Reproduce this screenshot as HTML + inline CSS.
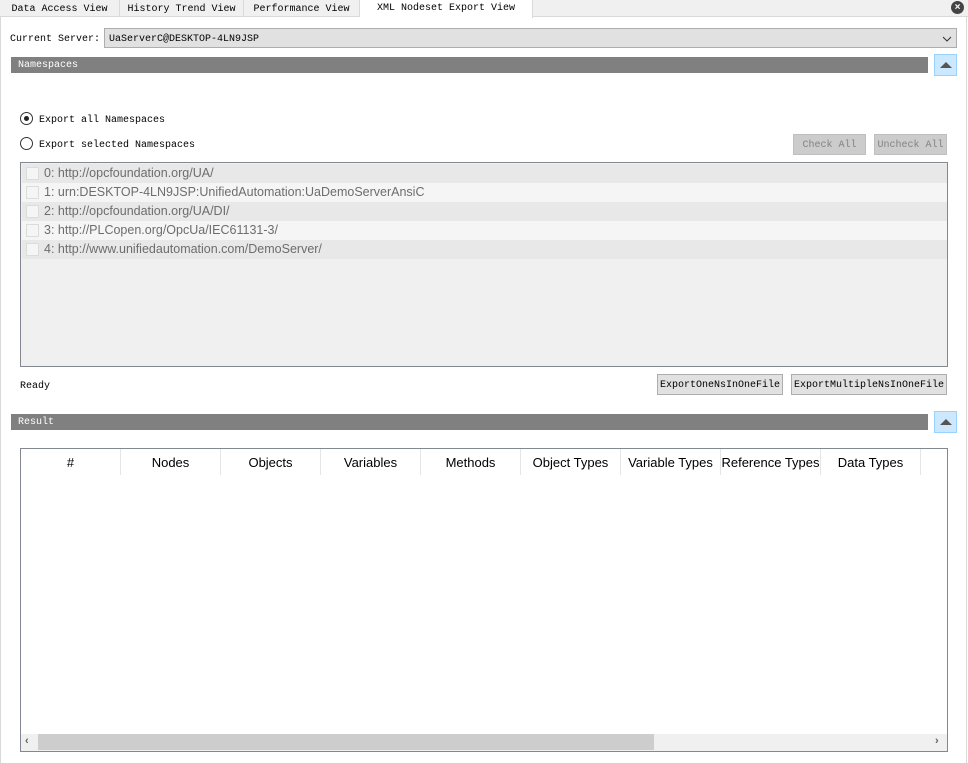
<!DOCTYPE html>
<html><head><style>
*{margin:0;padding:0;box-sizing:border-box}
body{width:968px;height:763px;background:#fff;position:relative;overflow:hidden;font-family:"Liberation Mono",monospace;font-size:10px;color:#000}
.a{position:absolute}
.tab{position:absolute;top:0;height:17px;background:#f0f0f0;border-right:1px solid #d9d9d9;border-bottom:1px solid #d9d9d9;line-height:19px;text-align:center}
.bar{position:absolute;left:11px;width:917px;height:16px;background:#808080;color:#fff;line-height:18px;padding-left:7px}
.col{position:absolute;top:0;width:100px;height:26px;border-right:1px solid #e5e5e5;text-align:center;line-height:27px;font-family:"Liberation Sans",sans-serif;font-size:13px}
.row{position:absolute;left:1px;width:925px;height:19px;line-height:19px;font-family:"Liberation Sans",sans-serif;font-size:12.5px;color:#6d6d6d;padding-left:22px}
.row i{position:absolute;left:4px;top:3px;width:13px;height:13px;border:1px solid #dcdcdc;background:#f5f5f5}
.btn{position:absolute;height:21px;border:1px solid #adadad;background:#e1e1e1;text-align:center;line-height:22px}
.col-btn{position:absolute;width:23px;height:22px;background:#cce8ff;border:1px solid #99d1ff}
.col-btn:after{content:"";position:absolute;left:5px;top:7px;border-left:6px solid transparent;border-right:6px solid transparent;border-bottom:6px solid #555}
</style></head><body>
<div class="a" style="left:0;top:0;width:968px;height:17px;background:#f0f0f0;border-bottom:1px solid #d9d9d9"></div>
<div class="tab" style="left:0;width:120px">Data Access View</div>
<div class="tab" style="left:120px;width:124px">History Trend View</div>
<div class="tab" style="left:244px;width:116px">Performance View</div>
<div class="a" style="left:360px;top:0;width:173px;height:18px;background:#fff;border-right:1px solid #d9d9d9;line-height:18px;text-align:center">XML Nodeset Export View</div>
<div class="a" style="left:951px;top:1px;width:13px;height:13px;border-radius:50%;background:#444;color:#fff;font:bold 10px/13px 'Liberation Sans',sans-serif;text-align:center">×</div>
<div class="a" style="left:0;top:17px;width:1px;height:746px;background:#d9d9d9"></div>
<div class="a" style="left:966px;top:17px;width:1px;height:746px;background:#d9d9d9"></div>

<div class="a" style="left:10px;top:34px">Current Server:</div>
<div class="a" style="left:104px;top:28px;width:853px;height:20px;background:#e1e1e1;border:1px solid #adadad;line-height:21px;padding-left:4px">UaServerC@DESKTOP-4LN9JSP
<svg class="a" style="right:4px;top:7px" width="10" height="6"><path d="M1 1L5 5L9 1" stroke="#333" fill="none"/></svg></div>
<div class="bar" style="top:57px">Namespaces</div>
<div class="col-btn" style="left:934px;top:54px"></div>

<div class="a" style="left:20px;top:112px;width:13px;height:13px;border:1px solid #333;border-radius:50%"><div class="a" style="left:3px;top:3px;width:5px;height:5px;border-radius:50%;background:#222"></div></div>
<div class="a" style="left:39px;top:115px">Export all Namespaces</div>
<div class="a" style="left:20px;top:137px;width:13px;height:13px;border:1px solid #333;border-radius:50%"></div>
<div class="a" style="left:39px;top:140px">Export selected Namespaces</div>
<div class="btn" style="left:793px;top:134px;width:73px;background:#ccc;border-color:#bfbfbf;color:#838383">Check All</div>
<div class="btn" style="left:874px;top:134px;width:73px;background:#ccc;border-color:#bfbfbf;color:#838383">Uncheck All</div>

<div class="a" style="left:20px;top:162px;width:928px;height:205px;background:#f0f0f0;border:1px solid #828790">
<div class="row" style="top:1px;background:#e8e8e8"><i></i>0: http://opcfoundation.org/UA/</div>
<div class="row" style="top:20px;background:#f5f5f5"><i></i>1: urn:DESKTOP-4LN9JSP:UnifiedAutomation:UaDemoServerAnsiC</div>
<div class="row" style="top:39px;background:#e8e8e8"><i></i>2: http://opcfoundation.org/UA/DI/</div>
<div class="row" style="top:58px;background:#f5f5f5"><i></i>3: http://PLCopen.org/OpcUa/IEC61131-3/</div>
<div class="row" style="top:77px;background:#e8e8e8"><i></i>4: http://www.unifiedautomation.com/DemoServer/</div>
</div>

<div class="a" style="left:20px;top:381px">Ready</div>
<div class="btn" style="left:657px;top:374px;width:126px">ExportOneNsInOneFile</div>
<div class="btn" style="left:791px;top:374px;width:156px">ExportMultipleNsInOneFile</div>

<div class="bar" style="top:414px">Result</div>
<div class="col-btn" style="left:934px;top:411px"></div>

<div class="a" style="left:20px;top:448px;width:928px;height:304px;border:1px solid #828790;background:#fff">
<div class="col" style="left:0">#</div>
<div class="col" style="left:100px">Nodes</div>
<div class="col" style="left:200px">Objects</div>
<div class="col" style="left:300px">Variables</div>
<div class="col" style="left:400px">Methods</div>
<div class="col" style="left:500px">Object Types</div>
<div class="col" style="left:600px">Variable Types</div>
<div class="col" style="left:700px;overflow:hidden;white-space:nowrap">Reference Types</div>
<div class="col" style="left:800px">Data Types</div>
<div class="a" style="left:0;top:285px;width:926px;height:17px;background:#f0f0f0">
<div class="a" style="left:17px;top:0;width:616px;height:16px;background:#cdcdcd"></div>
<div class="a" style="left:4px;top:1px;font:bold 11px 'Liberation Sans',sans-serif;color:#606060">‹</div>
<div class="a" style="left:914px;top:1px;font:bold 11px 'Liberation Sans',sans-serif;color:#606060">›</div>
</div>
</div>
</body></html>
